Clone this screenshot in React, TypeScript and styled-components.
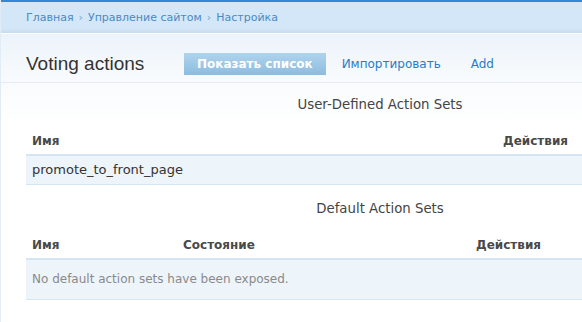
import { createGlobalStyle, styled } from "styled-components";

const GlobalStyle = createGlobalStyle`
  html, body {
    margin: 0;
    padding: 0;
    background: #ffffff;
  }
  body {
    font-family: "DejaVu Sans", Verdana, sans-serif;
    color: #333333;
  }
  #root {
    width: 582px;
    height: 322px;
    overflow: hidden;
  }
`;

type Column = {
  title: string;
  width: number;
};

const userColumns: Column[] = [
  { title: "Имя", width: 471 },
  { title: "Действия", width: 237 },
];

const defaultColumns: Column[] = [
  { title: "Имя", width: 151 },
  { title: "Состояние", width: 293 },
  { title: "Действия", width: 264 },
];

const crumbs = ["Главная", "Управление сайтом", "Настройка"];

export default function App() {
  return (
    <>
      <GlobalStyle />
      <Page>
        <Breadcrumbs>
          {crumbs.map((c, i) => (
            <Crumb key={`crumb-${i}`}>
              {i > 0 && <Sep>›</Sep>}
              <CrumbLink href="#">{c}</CrumbLink>
            </Crumb>
          ))}
        </Breadcrumbs>
        <Content>
          <TitleRow>
            <Title>Voting actions</Title>
            <Tabs>
              <Tab $active>Показать список</Tab>
              <Tab>Импортировать</Tab>
              <Tab>Add</Tab>
            </Tabs>
          </TitleRow>

          <Tables>
            <Table $gapAfter={2}>
              <Caption>User-Defined Action Sets</Caption>
              <colgroup>
                {userColumns.map((col, i) => (
                  <col key={`uc-${i}`} style={{ width: col.width }} />
                ))}
              </colgroup>
              <thead>
                <tr>
                  {userColumns.map((col, i) => (
                    <Th key={`uh-${i}`}>{col.title}</Th>
                  ))}
                </tr>
              </thead>
              <tbody>
                <Row>
                  <Td>promote_to_front_page</Td>
                  <Td></Td>
                </Row>
              </tbody>
            </Table>

            <Table>
              <Caption>Default Action Sets</Caption>
              <colgroup>
                {defaultColumns.map((col, i) => (
                  <col key={`dc-${i}`} style={{ width: col.width }} />
                ))}
              </colgroup>
              <thead>
                <tr>
                  {defaultColumns.map((col, i) => (
                    <Th key={`dh-${i}`}>{col.title}</Th>
                  ))}
                </tr>
              </thead>
              <tbody>
                <Row>
                  <EmptyTd colSpan={3}>No default action sets have been exposed.</EmptyTd>
                </Row>
              </tbody>
            </Table>
          </Tables>
        </Content>
      </Page>
    </>
  );
}

const Page = styled.div`
  width: 760px;
  min-height: 322px;
  border-left: 1px solid #e2ecf6;
`;

const Breadcrumbs = styled.div`
  height: 31px;
  border-top: 2px solid #2d88de;
  border-bottom: 1px solid #ffffff;
  padding-left: 25px;
  display: flex;
  align-items: center;
  background: linear-gradient(to bottom, #d3e7f8 0%, #d3e7f8 85%, #c6dcef 100%);
  font-size: 11px;
`;

const Crumb = styled.span`
  display: inline-flex;
  align-items: center;
`;

const Sep = styled.span`
  color: #7fa6c8;
  margin: 0 5px;
  font-size: 11px;
`;

const CrumbLink = styled.a`
  color: #4b8ac3;
  text-decoration: none;
`;

const Content = styled.div`
  background: linear-gradient(to bottom, #ecf3fa 0px, #f7fafd 40px, #ffffff 90px);
`;

const TitleRow = styled.div`
  display: flex;
  align-items: center;
  padding: 19px 0 7px 25px;
  border-bottom: 1px solid #e5ecf3;
`;

const Title = styled.h1`
  margin: 0;
  width: 158px;
  font-family: "Liberation Sans", Arial, sans-serif;
  font-weight: normal;
  font-size: 19px;
  color: #333333;
`;

const Tabs = styled.div`
  display: flex;
  align-items: center;
  gap: 2px;
`;

const Tab = styled.a<{ $active?: boolean }>`
  display: inline-block;
  height: 22px;
  line-height: 22px;
  padding: 0 ${(p) => (p.$active ? 13 : 14)}px;
  font-size: 12px;
  font-weight: ${(p) => (p.$active ? "bold" : "normal")};
  color: ${(p) => (p.$active ? "#ffffff" : "#2a7bc6")};
  background: ${(p) =>
    p.$active ? "linear-gradient(to bottom, #afd3ec, #8dbce0)" : "transparent"};
  text-decoration: none;
  cursor: pointer;
`;

const Tables = styled.div`
  padding-left: 25px;
`;

const Table = styled.table<{ $gapAfter?: number }>`
  width: 708px;
  border-collapse: collapse;
  table-layout: fixed;
  margin-bottom: ${(p) => p.$gapAfter ?? 0}px;
`;

const Caption = styled.caption`
  font-size: 13.3px;
  color: #444444;
  padding: 14px 0 12px;
`;

const Th = styled.th`
  text-align: left;
  font-size: 12px;
  font-weight: bold;
  color: #494949;
  padding: 10px 6px 6px;
  border-bottom: 2px solid #d4e5f3;
`;

const Row = styled.tr`
  background: #edf4fa;
  border-bottom: 1px solid #d4e5f3;
`;

const Td = styled.td`
  font-size: 13px;
  color: #333333;
  padding: 6px 6px 7px;
`;

const EmptyTd = styled.td`
  font-size: 12px;
  color: #8a8a8a;
  padding: 12px 6px 13px;
`;
